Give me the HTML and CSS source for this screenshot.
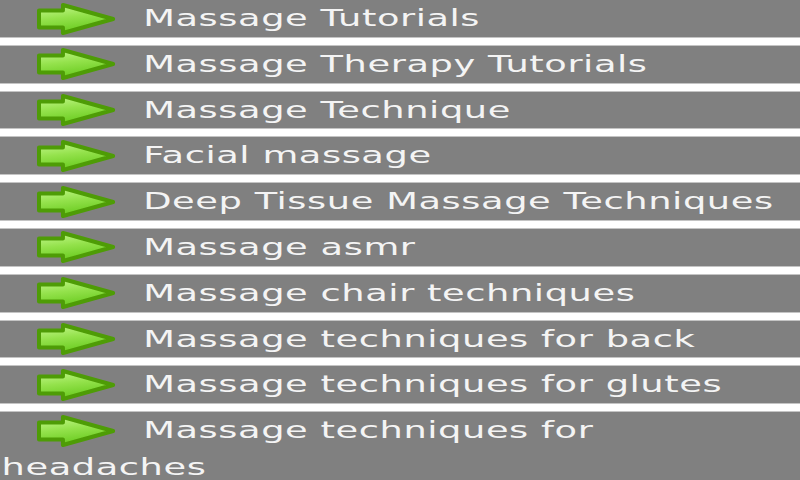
FILE: index.html
```html
<!DOCTYPE html>
<html>
<head>
<meta charset="utf-8">
<link rel="stylesheet" href="styles.css">
</head>
<body>
<svg class="defs" width="0" height="0" aria-hidden="true">
  <defs>
    <linearGradient id="g" x1="0" y1="0" x2="0.3" y2="1">
      <stop offset="0" stop-color="#c6f890"/>
      <stop offset="0.5" stop-color="#94e24c"/>
      <stop offset="1" stop-color="#6acb20"/>
    </linearGradient>
    <symbol id="arrow" viewBox="0 0 78 32" preserveAspectRatio="none">
      <path d="M2.2 7.5 L26 7.5 L26 2 L76 16 L26 30 L26 24.5 L2.2 24.5 Z" fill="url(#g)" stroke="#4e9c06" stroke-width="4" stroke-linejoin="round"/>
    </symbol>
  </defs>
</svg>
<div class="screen">
  <ul class="list">
    <li class="item"><svg class="arrow"><use href="#arrow"/></svg>Massage Tutorials</li>
    <li class="item"><svg class="arrow"><use href="#arrow"/></svg>Massage Therapy Tutorials</li>
    <li class="item"><svg class="arrow"><use href="#arrow"/></svg>Massage Technique</li>
    <li class="item"><svg class="arrow"><use href="#arrow"/></svg>Facial massage</li>
    <li class="item"><svg class="arrow"><use href="#arrow"/></svg>Deep Tissue Massage Techniques</li>
    <li class="item"><svg class="arrow"><use href="#arrow"/></svg>Massage asmr</li>
    <li class="item"><svg class="arrow"><use href="#arrow"/></svg>Massage chair techniques</li>
    <li class="item"><svg class="arrow"><use href="#arrow"/></svg>Massage techniques for back</li>
    <li class="item"><svg class="arrow"><use href="#arrow"/></svg>Massage techniques for glutes</li>
    <li class="item"><svg class="arrow"><use href="#arrow"/></svg>Massage techniques for headaches</li>
  </ul>
</div>
</body>
</html>
```
FILE: styles.css
```css
html, body {
  margin: 0;
  padding: 0;
  height: 100%;
  overflow: hidden;
  background: #ffffff;
}

.defs {
  display: block;
  width: 0;
  height: 0;
  overflow: hidden;
}

.screen {
  width: 500px;
  transform: scaleX(1.6);
  transform-origin: 0 0;
}

.list {
  list-style: none;
  margin: 0;
  padding: 0;
  display: flex;
  flex-direction: column;
  gap: 9px;
}

.item {
  background: #808080;
  min-height: 36.8px;
  line-height: 36.8px;
  font-family: "DejaVu Sans", sans-serif;
  font-size: 23px;
  letter-spacing: 0.35px;
  color: #f4f4f4;
  padding: 0 2px 0 1px;
  box-shadow: 0 -1px 0 #c4c4c4, 0 1px 0 #c4c4c4;
}

.arrow {
  display: inline-block;
  width: 49px;
  height: 32px;
  margin-left: 22px;
  margin-right: 17.5px;
  vertical-align: -8.5px;
}
```
